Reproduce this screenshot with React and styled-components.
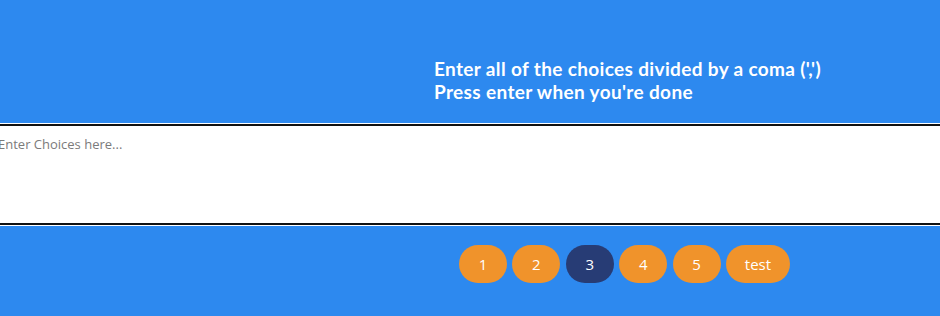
import React, { useState } from 'react';
import styled, { createGlobalStyle } from 'styled-components';

const GlobalStyle = createGlobalStyle`
  html, body {
    margin: 0;
    padding: 0;
    background: #2d89ef;
    overflow: hidden;
  }
`;

function App() {
  const [choices, setChoices] = useState('');
  const pages = ['1', '2', '3', '4', '5', 'test'];
  const [active, setActive] = useState('3');

  return (
    <Page>
      <GlobalStyle />
      <Header>
        <Instructions>
          Enter all of the choices divided by a coma (',')
          <br />
          Press enter when you're done
        </Instructions>
      </Header>
      <ChoicesBox>
        <ChoicesInput
          placeholder="Enter Choices here..."
          value={choices}
          onChange={(e) => setChoices(e.target.value)}
        />
      </ChoicesBox>
      <Pager>
        {pages.map((p) => (
          <PageButton key={p} $active={p === active} $wide={p.length > 1} onClick={() => setActive(p)}>
            {p}
          </PageButton>
        ))}
      </Pager>
    </Page>
  );
}

export default App;

const Page = styled.div`
  width: 940px;
  height: 316px;
  background: #2d89ef;
  display: flex;
  flex-direction: column;
`;

const Header = styled.div`
  flex-shrink: 0;
  height: 123px;
  padding: 57px 0 0 434px;
  box-sizing: border-box;
`;

const Instructions = styled.h2`
  margin: 0;
  color: #ffffff;
  font-family: 'Lato', 'Open Sans', sans-serif;
  font-weight: 700;
  font-size: 19px;
  line-height: 23px;
  letter-spacing: 0.35px;
`;

const ChoicesBox = styled.div`
  flex-shrink: 0;
  border-top: 1px solid #ffffff;
  border-bottom: 1px solid #ffffff;
`;

const ChoicesInput = styled.textarea`
  display: block;
  width: 100%;
  height: 101px;
  box-sizing: border-box;
  margin: 0;
  padding: 9px 0 0 0;
  border: none;
  border-top: 2px solid #111111;
  border-bottom: 2px solid #111111;
  resize: none;
  outline: none;
  font-family: 'Open Sans', sans-serif;
  font-size: 13px;
  text-indent: -2px;
  color: #333;

  &::placeholder {
    color: #7b7b7b;
  }
`;

const Pager = styled.div`
  display: flex;
  gap: 5.4px;
  padding: 19px 0 0 459px;
`;

const PageButton = styled.button`
  width: ${(p) => (p.$wide ? '64px' : '48px')};
  height: 38px;
  border: none;
  border-radius: 19px;
  background: ${(p) => (p.$active ? '#273c75' : '#f0932b')};
  color: #ffffff;
  font-family: 'Open Sans', sans-serif;
  font-size: 15px;
  cursor: pointer;
  padding: 0;
`;
